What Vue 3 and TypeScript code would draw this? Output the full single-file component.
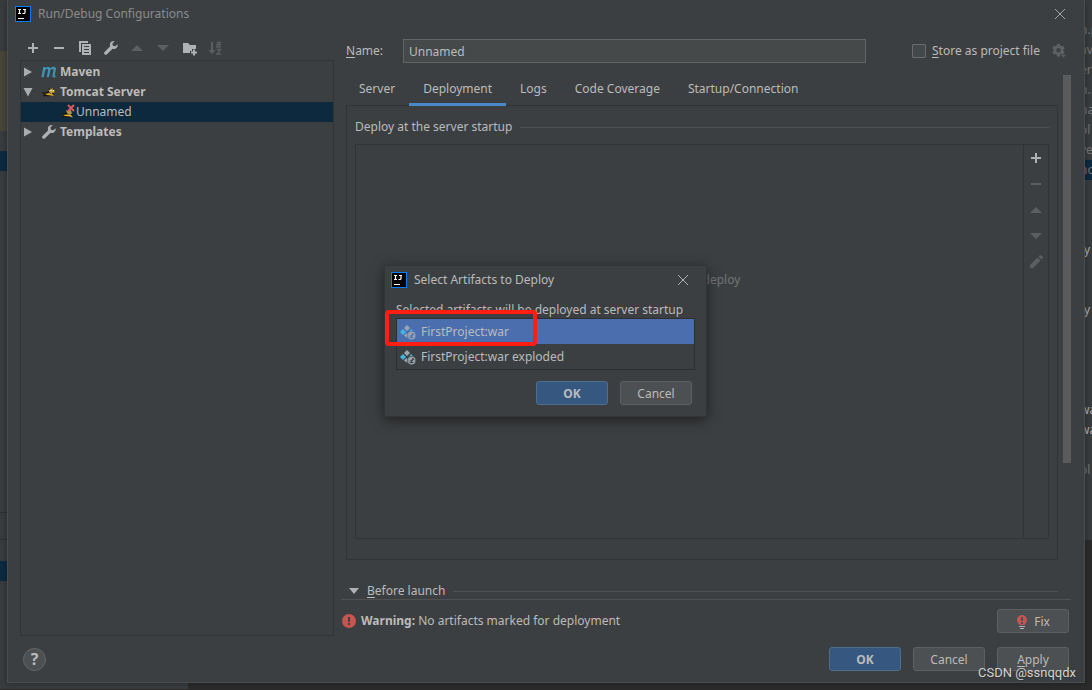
<script setup lang="ts">
import { ref } from 'vue'

interface EditorLine {
  text: string
  kind: string
}

const name = ref('Unnamed')
const storeAsFile = ref(false)
const activeTab = ref('Deployment')
const selectedArtifact = ref(0)

const tabs: string[] = ['Server', 'Deployment', 'Logs', 'Code Coverage', 'Startup/Connection']
const artifacts: string[] = ['FirstProject:war', 'FirstProject:war exploded']

const rightLines: EditorLine[] = [
  { text: '', kind: '' },
  { text: 'n.p', kind: 'dim' },
  { text: 'av', kind: 'dim' },
  { text: 'er', kind: 'dim' },
  { text: 'n.', kind: 'dim' },
  { text: 'na', kind: 'dim' },
  { text: 'ol', kind: 'dim' },
  { text: 've', kind: 'dim' },
  { text: 'no', kind: 'dim picked' },
  { text: '', kind: '' },
  { text: '', kind: '' },
  { text: '', kind: '' },
  { text: 'y', kind: 'late' },
  { text: '', kind: '' },
  { text: '', kind: '' },
  { text: 'y', kind: 'late' },
  { text: '', kind: '' },
  { text: '', kind: '' },
  { text: '', kind: '' },
  { text: '', kind: '' },
  { text: 'wa', kind: '' },
  { text: 'wa', kind: '' },
  { text: '', kind: '' },
  { text: 'ol', kind: 'dim' },
]
</script>

<template>
  <div class="screen">
    <div class="backdrop" aria-hidden="true">
      <div class="strip-left">
        <i class="changed"></i>
        <i class="picked first"></i>
        <i class="rule one"></i>
        <i class="rule two"></i>
        <i class="picked second"></i>
      </div>
      <div class="strip-right">
        <div v-for="(line, i) in rightLines" :key="i" class="line" :class="line.kind">{{ line.text }}</div>
      </div>
      <div class="strip-bottom"></div>
    </div>

    <main class="dialog">
      <header class="titlebar">
        <svg class="logo" width="16" height="16" viewBox="0 0 16 16">
          <rect width="16" height="16" fill="#087cfa" />
          <rect x="1" y="1" width="14" height="14" fill="#000" />
          <path d="M3 3.500h3M4.500 3.500v4M3 7.500h3M8 3.500h3M10 3.500v3q0 1-1 1h-1.500M3 12.500h6" fill="none" stroke="#fff" stroke-width="1.200" />
        </svg>
        <h1>Run/Debug Configurations</h1>
        <button class="close" aria-label="Close">
          <svg width="12" height="12" viewBox="0 0 12 12"><path d="M1 1l10 10M11 1L1 11" stroke="#a2a4a5" stroke-width="1" fill="none" /></svg>
        </button>
      </header>

      <div class="body">
        <aside class="side">
          <div class="toolbar">
            <button aria-label="Add"><svg viewBox="0 0 16 16"><path d="M3 8h10M8 3v10" stroke="#afb1b3" stroke-width="2" /></svg></button>
            <button aria-label="Remove"><svg viewBox="0 0 16 16"><path d="M3 8h10" stroke="#afb1b3" stroke-width="2" /></svg></button>
            <button aria-label="Copy"><svg viewBox="0 0 16 16"><path d="M2 1h9v2H4v9H2z" fill="#afb1b3" /><path fill-rule="evenodd" d="M5 4h9v11H5zM7 6v1h5V6zM7 9v1h5V9zM7 12v1h5v-1z" fill="#afb1b3" /></svg></button>
            <button aria-label="Edit templates"><svg viewBox="0 0 16 16"><path d="M14.700 4.200l-2.500 2.100-2.300-.6-.5-2.200L11.600 1.200C9.500.7 7.300 2 6.900 4.200c-.1.700 0 1.400.3 2.100L1.600 11.900c-.7.700-.7 1.700 0 2.400.7.700 1.700.7 2.400 0l5.600-5.500c2.500 1 5.500-1.200 5.100-4.600z" fill="#afb1b3" /></svg></button>
            <button aria-label="Move up" disabled><svg viewBox="0 0 16 16"><path d="M2 11l6-6 6 6z" fill="#5c5e60" /></svg></button>
            <button aria-label="Move down" disabled><svg viewBox="0 0 16 16"><path d="M2 5l6 6 6-6z" fill="#5c5e60" /></svg></button>
            <button aria-label="New folder"><svg viewBox="0 0 16 16"><path d="M2 3h5l2 2h6v4h-4v2H9v2H2z" fill="#afb1b3" /><path d="M13 9.500v6M10 12.500h6" stroke="#afb1b3" stroke-width="2" /></svg></button>
            <button aria-label="Sort configurations" disabled><svg viewBox="0 0 16 16"><path d="M4 2h2v8h2.500L5 14 1.500 10H4z" fill="#5c5e60" /><path d="M10 2.500h3v4.500h-3v-2.500h3M10 9.500h3.500l-3.500 4.500h4" fill="none" stroke="#5c5e60" stroke-width="1.300" /></svg></button>
          </div>
          <ul class="tree" role="tree">
            <li role="treeitem">
              <svg class="arrow" viewBox="0 0 10 10"><path d="M1 .5l8 4.500-8 4.500z" fill="#a9abad" /></svg>
              <svg class="glyph" viewBox="0 0 16 16"><path d="M2.300 3h2.300l-.2 1.300C5.800 2.600 8.800 2.400 9.300 4.500c1.500-2.200 6-2.500 5.600.9L13.700 11c-.1.700.3.900 1 .7l-.3 1.600c-2 .5-3.300-.3-2.900-2.100l1-4.900c.2-1.600-2.600-1.700-3.200.4L7.900 13.300H5.700l1.400-6.800c.3-1.900-2.500-2-3.100.3L2.700 13.300H.3z" fill="#3d94b4" /></svg>
              <b>Maven</b>
            </li>
            <li role="treeitem">
              <svg class="arrow" viewBox="0 0 10 10"><path d="M.5 1h9L5 9.500z" fill="#a9abad" /></svg>
              <svg class="glyph" viewBox="0 0 16 16">
                <path d="M2 10l3-2 4-1 2 2-1 3-4 .5z" fill="#17140d" /><path d="M8 4l2 1 3-1 .5 4L11 10 8 8z" fill="#c9a748" /><path d="M4 10l4-1 3 1 2 2-3-.5L6 11z" fill="#e0a92a" /><path d="M2 12l3-.5M3 8l-2 1M8 4l1 2M13 4l-1 2M11 9l2 1" stroke="#17140d" /><path d="M9.500 6.500h1M12 6.500h1" stroke="#fff3c0" />
              </svg>
              <b>Tomcat Server</b>
            </li>
            <li role="treeitem" class="leaf selected" aria-selected="true">
              <svg class="glyph" viewBox="0 0 16 16">
                <path d="M2 11l3-2 4-1 2 2-1 3-4 .5z" fill="#17140d" /><path d="M6 6l2 1 3-1 1 4-3 1-2-2z" fill="#b39545" /><path d="M3 11l4-.5 4 .5 2 2.500-3-1-5-.5z" fill="#e8b32e" /><path d="M2 13.500l3-1M3 9l-1 1M11 10l2 1" stroke="#17140d" /><path d="M8 1l6 6M14 1L8 7" stroke="#db5860" stroke-width="2" />
              </svg>
              <span>Unnamed</span>
            </li>
            <li role="treeitem">
              <svg class="arrow" viewBox="0 0 10 10"><path d="M1 .5l8 4.500-8 4.500z" fill="#a9abad" /></svg>
              <svg class="glyph" viewBox="0 0 16 16"><path d="M14.700 4.200l-2.500 2.100-2.300-.6-.5-2.200L11.600 1.200C9.500.7 7.300 2 6.900 4.200c-.1.700 0 1.400.3 2.100L1.600 11.900c-.7.700-.7 1.700 0 2.400.7.700 1.700.7 2.400 0l5.600-5.500c2.500 1 5.500-1.200 5.100-4.600z" fill="#afb1b3" /></svg>
              <b>Templates</b>
            </li>
          </ul>
        </aside>

        <section class="config">
          <div class="name-row">
            <label class="name-label" for="config-name"><u>N</u>ame:</label>
            <input id="config-name" v-model="name" class="name-input" type="text" />
            <input id="store" v-model="storeAsFile" class="check" type="checkbox" />
            <label class="store-label" for="store"><u>S</u>tore as project file</label>
            <svg class="gear" width="16" height="16" viewBox="0 0 16 16">
              <path fill-rule="evenodd" d="M6 1h3l.4 1.800 1 .5 1.800-.6 1.500 2.500-1.400 1.300v1.200l1.400 1.300-1.500 2.500-1.800-.6-1 .5L9 13.500H6l-.4-2.100-1-.5-1.800.6L1.300 9l1.400-1.300V6.500L1.300 5.200l1.500-2.500 1.800.6 1-.5zM7.500 5a2.200 2.200 0 100 4.400 2.200 2.200 0 000-4.400z" fill="#5e6163" />
              <path d="M9.500 11.500h6L12.500 15z" fill="#5e6163" stroke="#3c3f41" stroke-width=".5" />
            </svg>
          </div>

          <div class="scroll-area">
            <div class="content">
              <div class="tabs" role="tablist">
                <button v-for="tab in tabs" :key="tab" role="tab" class="tab" :class="{ active: tab === activeTab }" :aria-selected="tab === activeTab" @click="activeTab = tab">{{ tab }}</button>
              </div>
              <div class="panel">
                <h2 class="group-title">Deploy at the server startup</h2>
                <div class="deploy">
                  <div class="deploy-list"><p>Nothing to deploy</p></div>
                  <div class="deploy-tools">
                    <button aria-label="Add artifact"><svg viewBox="0 0 16 16"><path d="M3 8h10M8 3v10" stroke="#afb1b3" stroke-width="2" /></svg></button>
                    <button aria-label="Remove artifact" disabled><svg viewBox="0 0 16 16"><path d="M3 8h10" stroke="#5c5e60" stroke-width="2" /></svg></button>
                    <button aria-label="Move artifact up" disabled><svg viewBox="0 0 16 16"><path d="M2 11l6-6 6 6z" fill="#5c5e60" /></svg></button>
                    <button aria-label="Move artifact down" disabled><svg viewBox="0 0 16 16"><path d="M2 5l6 6 6-6z" fill="#5c5e60" /></svg></button>
                    <button aria-label="Edit artifact" disabled><svg viewBox="0 0 16 16"><path d="M2 14v-3l7.500-7.500 3 3L5 14zM10.500 2.500l1-1q1-1 2 0l1 1q1 1 0 2l-1 1z" fill="#5c5e60" /></svg></button>
                  </div>
                </div>
              </div>
              <h2 class="before">
                <svg width="10" height="6" viewBox="0 0 10 6"><path d="M0 0h10L5 6z" fill="#afb1b3" /></svg>
                <span><u>B</u>efore launch</span>
              </h2>
            </div>
            <div class="scrollbar"><div class="thumb"></div></div>
          </div>

          <div class="status">
            <svg width="14" height="14" viewBox="0 0 14 14"><circle cx="7" cy="7" r="7" fill="#c75450" /><path d="M6 3h2v5H6zM6 9h2v2H6z" fill="#3c3f41" /></svg>
            <p><b>Warning:</b> No artifacts marked for deployment</p>
            <button class="btn fix">
              <svg width="12" height="16" viewBox="0 0 12 16"><path d="M6 1a5 5 0 015 5c0 2-1.500 3.200-2.500 5h-5C2.500 9.200 1 8 1 6a5 5 0 015-5z" fill="#c75450" /><path d="M5 3h2v4H5zM5 8h2v2H5z" fill="#4c5052" /><path d="M3 12.500h6M4 14.500h4" stroke="#afb1b3" /></svg>
              Fix
            </button>
          </div>
        </section>
      </div>

      <footer class="footer">
        <button class="help" aria-label="Help">?</button>
        <button class="btn primary">OK</button>
        <button class="btn">Cancel</button>
        <button class="btn"><span><u>A</u>pply</span></button>
      </footer>
    </main>

    <section class="modal" role="dialog" aria-labelledby="modal-title">
      <header class="modal-bar">
        <svg class="logo" width="16" height="16" viewBox="0 0 16 16">
          <rect width="16" height="16" fill="#087cfa" />
          <rect x="1" y="1" width="14" height="14" fill="#000" />
          <path d="M3 3.500h3M4.500 3.500v4M3 7.500h3M8 3.500h3M10 3.500v3q0 1-1 1h-1.500M3 12.500h6" fill="none" stroke="#fff" stroke-width="1.200" />
        </svg>
        <h2 id="modal-title">Select Artifacts to Deploy</h2>
        <button class="close" aria-label="Close artifact selection">
          <svg width="12" height="12" viewBox="0 0 12 12"><path d="M1 1l10 10M11 1L1 11" stroke="#b0b2b3" stroke-width="1" fill="none" /></svg>
        </button>
      </header>
      <p id="artifact-label" class="modal-label">Selected artifacts will be deployed at server startup</p>
      <ul class="artifacts" role="listbox" aria-labelledby="artifact-label">
        <li v-for="(item, i) in artifacts" :key="item" role="option" :aria-selected="i === selectedArtifact" :class="{ chosen: i === selectedArtifact }" @click="selectedArtifact = i">
          <svg width="16" height="16" viewBox="0 0 16 16">
            <path d="M7 1l3 3-3 3-3-3z" fill="#9aa7b0" /><path d="M3 5l3 3-3 3-3-3z" fill="#40b6e0" /><path d="M11 5l2.200 2q-2.700-.6-4.400 1z" fill="#40b6e0" /><path d="M6.500 9l.7.700q-.8 2.300.2 4.300L4 11.500z" fill="#9aa7b0" />
            <circle cx="11.500" cy="11.500" r="3.400" fill="none" stroke="#9aa7b0" stroke-width="1.200" /><path d="M8.500 10l2.500-1.500 1.500.7-.8 1.500-1.400.5.5 1.300-1 1.500zM13 11h1.500l-1 2.500-1.500-.8z" fill="#9aa7b0" />
          </svg>
          {{ item }}
        </li>
      </ul>
      <div class="modal-actions">
        <button class="btn primary">OK</button>
        <button class="btn">Cancel</button>
      </div>
      <div class="marker"></div>
    </section>

    <div class="watermark">CSDN @ssnqqdx</div>
  </div>
</template>

<style>
html,
body {
  background: #2b2b2b;
}
</style>

<style scoped>
* {
  box-sizing: border-box;
}

.screen {
  position: relative;
  display: flex;
  min-height: 100vh;
  overflow: hidden;
  padding: 0 7px 7px;
  background: #2b2b2b;
  color: #bbbbbb;
  font: 12px/20px 'Noto Sans', 'Open Sans', sans-serif;
}

h1,
h2,
p,
ul {
  margin: 0;
  padding: 0;
  font-size: 12px;
  font-weight: 400;
  list-style: none;
}

b {
  font-weight: 700;
}

u {
  text-underline-offset: 2px;
}

button,
input {
  margin: 0;
  padding: 0;
  border: 0;
  background: none;
  color: inherit;
  font: inherit;
}

svg {
  display: block;
  flex: none;
}

.backdrop {
  position: absolute;
  inset: 0;
  overflow: hidden;
}

.strip-left {
  position: absolute;
  inset: 0 auto 0 0;
  width: 8px;
  background: #393c3e;
}

.strip-left i {
  position: absolute;
  left: 0;
  width: 100%;
  height: 20px;
}

.strip-left .changed {
  top: 51px;
  height: 80px;
  background: #49453b;
}

.strip-left .picked {
  background: #0c2940;
}

.strip-left .first {
  top: 151px;
}

.strip-left .second {
  top: 561px;
}

.strip-left .rule {
  height: 1px;
  background: #2e3031;
}

.strip-left .one {
  top: 512px;
}

.strip-left .two {
  top: 539px;
}

.strip-right {
  position: absolute;
  top: 0;
  right: 0;
  width: 12px;
  height: 540px;
  background: #393c3e;
}

.line {
  height: 20px;
  overflow: hidden;
  color: #b0b2b3;
  white-space: nowrap;
}

.line.dim {
  color: #747677;
}

.line.late {
  padding-left: 4px;
}

.line.picked {
  background: #0c2940;
}

.strip-bottom {
  position: absolute;
  bottom: 0;
  left: 0;
  width: 188px;
  height: 7px;
  border-bottom: 1px solid #2b2b2b;
  background: #393c3e;
}

.dialog {
  position: relative;
  display: flex;
  flex: 1;
  flex-direction: column;
  border: 1px solid #4a4d4e;
  border-top: 0;
  background: #3c3f41;
  box-shadow: 0 0 6px rgba(0, 0, 0, 0.35);
}

.titlebar {
  display: flex;
  align-items: center;
  gap: 7px;
  height: 28px;
  padding: 0 18px 0 7px;
  color: #8a8c8d;
}

.close {
  margin-left: auto;
}

.body {
  display: grid;
  flex: 1;
  grid-template-columns: 314px 1fr;
  gap: 7px;
  padding: 0 13px 0 12px;
}

.side {
  display: flex;
  flex-direction: column;
}

.toolbar {
  display: flex;
  align-items: center;
  gap: 10px;
  height: 32px;
  padding: 8px 5px 0;
}

.toolbar svg,
.deploy-tools svg {
  width: 16px;
  height: 16px;
}

.tree {
  flex: 1;
  border: 1px solid #313335;
  padding-top: 1px;
}

.tree li {
  display: flex;
  align-items: center;
  height: 20px;
  padding-left: 2px;
}

.arrow {
  width: 10px;
  height: 10px;
  margin-right: 8px;
}

.glyph {
  width: 16px;
  height: 16px;
  margin-right: 3px;
}

.tree .leaf {
  padding-left: 39px;
}

.leaf .glyph {
  margin-right: 0;
}

.tree .selected {
  background: #0d293e;
}

.config {
  display: flex;
  flex-direction: column;
  min-width: 0;
  padding-top: 11px;
}

.name-row {
  display: flex;
  align-items: center;
  height: 24px;
  padding: 0 4px 0 5px;
}

.name-label {
  width: 57px;
}

.name-input {
  flex: 1;
  min-width: 0;
  height: 24px;
  border: 1px solid #646464;
  padding: 0 5px;
  background: #45494a;
}

.check {
  width: 14px;
  height: 14px;
  margin: 0 6px 0 46px;
  border: 1px solid #6b6b6b;
  border-radius: 1px;
  background: #43494a;
  appearance: none;
}

.store-label {
  width: 114px;
}

.gear {
  margin-left: 5px;
}

.scroll-area {
  display: grid;
  flex: 1;
  grid-template-columns: 1fr 8px;
  gap: 5px;
  margin-top: 12px;
  padding-left: 5px;
}

.content {
  display: flex;
  flex-direction: column;
}

.tabs {
  display: flex;
  height: 31px;
  margin: 0 0 -1px -1px;
}

.tab {
  position: relative;
  padding: 0 14px 3px;
}

.tab.active {
  border-bottom: 3px solid #4a88c7;
  padding-bottom: 0;
}

.panel {
  display: flex;
  flex: 1;
  flex-direction: column;
  border: 1px solid #313335;
  padding: 11px 8px 20px;
}

.group-title,
.before {
  display: flex;
  align-items: center;
}

.group-title::after,
.before::after {
  content: '';
  flex: 1;
  height: 1px;
  margin-left: 8px;
  background: #515151;
}

.deploy {
  display: grid;
  flex: 1;
  grid-template-columns: 1fr 25px;
  margin-top: 7px;
  border: 1px solid #313335;
}

.deploy-list {
  padding-top: 125px;
  color: #737577;
  text-align: center;
}

.deploy-tools {
  display: flex;
  flex-direction: column;
  align-items: center;
  gap: 10px;
  border-left: 1px solid #313335;
  padding-top: 5px;
}

.before {
  height: 16px;
  margin-top: 23px;
  padding-left: 3px;
}

.before svg {
  margin-right: 8px;
}

.scrollbar {
  height: 100%;
}

.thumb {
  height: 74%;
  background: #595b5d;
}

.status {
  display: flex;
  align-items: center;
  gap: 5px;
  height: 37px;
  border-top: 1px solid #515151;
  padding: 6px 2px 0 1px;
}

.btn {
  display: flex;
  align-items: center;
  justify-content: center;
  width: 72px;
  height: 24px;
  border: 1px solid #5e6060;
  border-radius: 3px;
  padding-top: 2px;
  background: #4c5052;
}

.btn.primary {
  border-color: #4c708c;
  background: #365880;
  font-weight: 700;
}

.fix {
  gap: 6px;
  margin-left: auto;
}

.footer {
  display: flex;
  align-items: center;
  gap: 12px;
  padding: 11px 15px;
}

.help {
  width: 23px;
  height: 23px;
  margin-right: auto;
  border: 1px solid #646768;
  border-radius: 50%;
  background: #4c5052;
  font: 700 16px/20px 'Open Sans', sans-serif;
}

.modal {
  position: absolute;
  top: 265px;
  left: calc(50% - 162px);
  width: 323px;
  border: 1px solid #323435;
  padding-bottom: 11px;
  background: #3c3f41;
  box-shadow: 0 3px 12px rgba(0, 0, 0, 0.5);
}

.modal-bar {
  display: flex;
  align-items: center;
  gap: 7px;
  height: 27px;
  padding: 0 17px 0 6px;
}

.modal-label {
  margin: 7px 11px 0;
  height: 18px;
  white-space: nowrap;
}

.artifacts {
  margin: 0 11px;
  border: 1px solid #2d2f31;
}

.artifacts li {
  display: flex;
  align-items: center;
  gap: 5px;
  height: 25px;
  padding-left: 3px;
}

.artifacts .chosen {
  background: #4b6eaf;
}

.modal-actions {
  display: flex;
  justify-content: flex-end;
  gap: 12px;
  margin-top: 11px;
  padding-right: 14px;
}

.marker {
  position: absolute;
  top: 44px;
  left: 0;
  width: 152px;
  height: 36px;
  border: 4px solid #ff1e12;
  border-radius: 4px;
}

.watermark {
  position: absolute;
  right: 16px;
  bottom: 7px;
  color: #d0d1d2;
  font: 13px/20px Roboto, 'Liberation Sans', sans-serif;
  text-shadow: 1px 1px 1px #333;
}
</style>
